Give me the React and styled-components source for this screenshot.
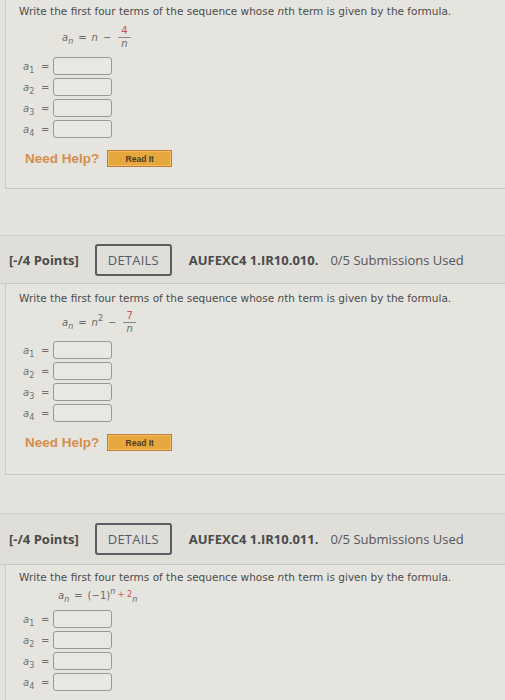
import React from "react";
import styled, { createGlobalStyle } from "styled-components";

const Global = createGlobalStyle`
  body {
    margin: 0;
    background: #e3e2dd;
  }
`;

const problems = [
  { id: "AUFEXC4 1.IR10.010." },
  { id: "AUFEXC4 1.IR10.011." },
];

const Page = styled.div`
  width: 505px;
  height: 700px;
  overflow: hidden;
  background: #e3e2dd;
  color: #4a4a4a;
`;

const Header = styled.div`
  display: flex;
  align-items: center;
  height: ${(p) => p.$h}px;
  margin-top: ${(p) => p.$gap}px;
  padding-left: 9px;
  border-top: 1px solid #cfcec9;
  border-bottom: 1px solid #c8c7c2;
  background: #dfded9;
  font-family: "Open Sans", "Liberation Sans", sans-serif;
  font-size: 13px;
  color: #4a4a4a;
`;

const Points = styled.span`
  font-weight: 700;
`;

const Details = styled.div`
  margin-left: 16px;
  width: 73px;
  height: 28px;
  display: flex;
  align-items: center;
  justify-content: center;
  border: 2px solid #5a5c62;
  border-radius: 3px;
  color: #555a66;
  letter-spacing: 0.2px;
`;

const Code = styled.span`
  margin-left: 17px;
  font-weight: 700;
`;

const Subs = styled.span`
  margin-left: 12px;
  color: #55565a;
`;

const Body = styled.div`
  margin-left: 5px;
  border-left: 1px solid #cbcac5;
  border-bottom: ${(p) => (p.$open ? "none" : "1px solid #c8c7c2")};
  padding: ${(p) => p.$pt}px 0 ${(p) => p.$pb}px 13px;
  background: #e5e4df;
  font-family: "DejaVu Sans", Verdana, sans-serif;
`;

const Prompt = styled.div`
  font-size: 10.5px;
  color: #4c4c4c;
  line-height: 14px;
`;

const Formula = styled.div`
  margin-left: ${(p) => p.$ml}px;
  margin-top: ${(p) => p.$mt}px;
  font-size: 10px;
  line-height: 14px;
  color: #6a6a6a;
  white-space: nowrap;
`;

const Var = styled.span`
  font-style: italic;
`;

const Sub = styled.sub`
  font-size: 8px;
  font-style: ${(p) => (p.$italic ? "italic" : "normal")};
  vertical-align: -3px;
  line-height: 0;
`;

const Sup = styled.sup`
  font-size: 8px;
  font-style: ${(p) => (p.$italic ? "italic" : "normal")};
  color: ${(p) => p.$color || "inherit"};
  vertical-align: ${(p) => p.$lift || 5}px;
  line-height: 0;
`;

const Op = styled.span`
  margin: 0 5px;
`;

const Frac = styled.span`
  display: inline-flex;
  flex-direction: column;
  align-items: center;
  vertical-align: middle;
  margin-left: 2px;
  line-height: 12px;
`;

const Num = styled.span`
  color: #c9525a;
  padding: 0 3px;
  border-bottom: 1px solid #8a8a8a;
`;

const Den = styled.span`
  font-style: italic;
`;

const Rows = styled.div`
  display: flex;
  flex-direction: column;
  gap: 3px;
  margin-top: ${(p) => p.$mt}px;
  margin-left: 4px;
`;

const Row = styled.div`
  display: flex;
  align-items: center;
  font-size: 10px;
  color: #707070;
`;

const Label = styled.span`
  width: 18px;
  font-style: italic;
`;

const Eq = styled.span`
  width: 12px;
`;

const Box = styled.div`
  width: 57px;
  height: 16px;
  border: 1px solid #9a9994;
  border-radius: 3px;
  background: #e8e7e2;
`;

const Help = styled.div`
  display: flex;
  align-items: center;
  margin-top: 12px;
  margin-left: 6px;
`;

const NeedHelp = styled.span`
  font-family: "Liberation Sans", Arial, sans-serif;
  font-weight: 700;
  font-size: 13.5px;
  color: #d58e4c;
`;

const ReadIt = styled.div`
  margin-left: 8px;
  width: 63px;
  height: 15px;
  display: flex;
  align-items: center;
  justify-content: center;
  background: #e6a83c;
  border: 1px solid #c27a36;
  box-shadow: inset 0 0 0 1px #f0c060;
  font-family: "Liberation Sans", Arial, sans-serif;
  font-weight: 700;
  font-size: 8.5px;
  color: #4e3a22;
`;

const FracFormula = ({ num, sq, ml, mt }) => (
  <Formula $ml={ml} $mt={mt}>
    <Var>a</Var>
    <Sub $italic>n</Sub>
    <Op>=</Op>
    <Var>n</Var>
    {sq && <Sup>2</Sup>}
    <Op>−</Op>
    <Frac>
      <Num>{num}</Num>
      <Den>n</Den>
    </Frac>
  </Formula>
);

const InlineFormula = ({ ml, mt }) => (
  <Formula $ml={ml} $mt={mt}>
    <Var>a</Var>
    <Sub $italic>n</Sub>
    <Op>=</Op>
    <span>(−1)</span>
    <Sup $italic>n</Sup>
    <Sup $color="#c9525a" $lift={2}>&nbsp;+&nbsp;2</Sup>
    <Sub $italic>n</Sub>
  </Formula>
);

const Answers = ({ mt }) => (
  <Rows $mt={mt}>
    {[1, 2, 3, 4].map((i) => (
      <Row key={i}>
        <Label>
          a<Sub>{i}</Sub>
        </Label>
        <Eq>=</Eq>
        <Box />
      </Row>
    ))}
  </Rows>
);

const PromptText = () => (
  <Prompt>
    Write the first four terms of the sequence whose <Var>n</Var>th term is given by the formula.
  </Prompt>
);

const HelpRow = () => (
  <Help>
    <NeedHelp>Need Help?</NeedHelp>
    <ReadIt>Read It</ReadIt>
  </Help>
);

const ProblemHeader = ({ id, gap, h }) => (
  <Header $gap={gap} $h={h}>
    <Points>[-/4 Points]</Points>
    <Details>DETAILS</Details>
    <Code>{id}</Code>
    <Subs>0/5 Submissions Used</Subs>
  </Header>
);

export default function App() {
  return (
    <Page>
      <Global />
      <Body $pt={4} $pb={21}>
        <PromptText />
        <FracFormula num="4" ml={43} mt={7} />
        <Answers mt={7} />
        <HelpRow />
      </Body>

      <ProblemHeader id={problems[0].id} gap={46} h={47} />
      <Body $pt={7} $pb={23}>
        <PromptText />
        <FracFormula num="7" sq ml={43} mt={5} />
        <Answers mt={6} />
        <HelpRow />
      </Body>

      <ProblemHeader id={problems[1].id} gap={38} h={50} />
      <Body $pt={5} $pb={20} $open>
        <PromptText />
        <InlineFormula ml={39} mt={5} />
        <Answers mt={7} />
      </Body>
    </Page>
  );
}
